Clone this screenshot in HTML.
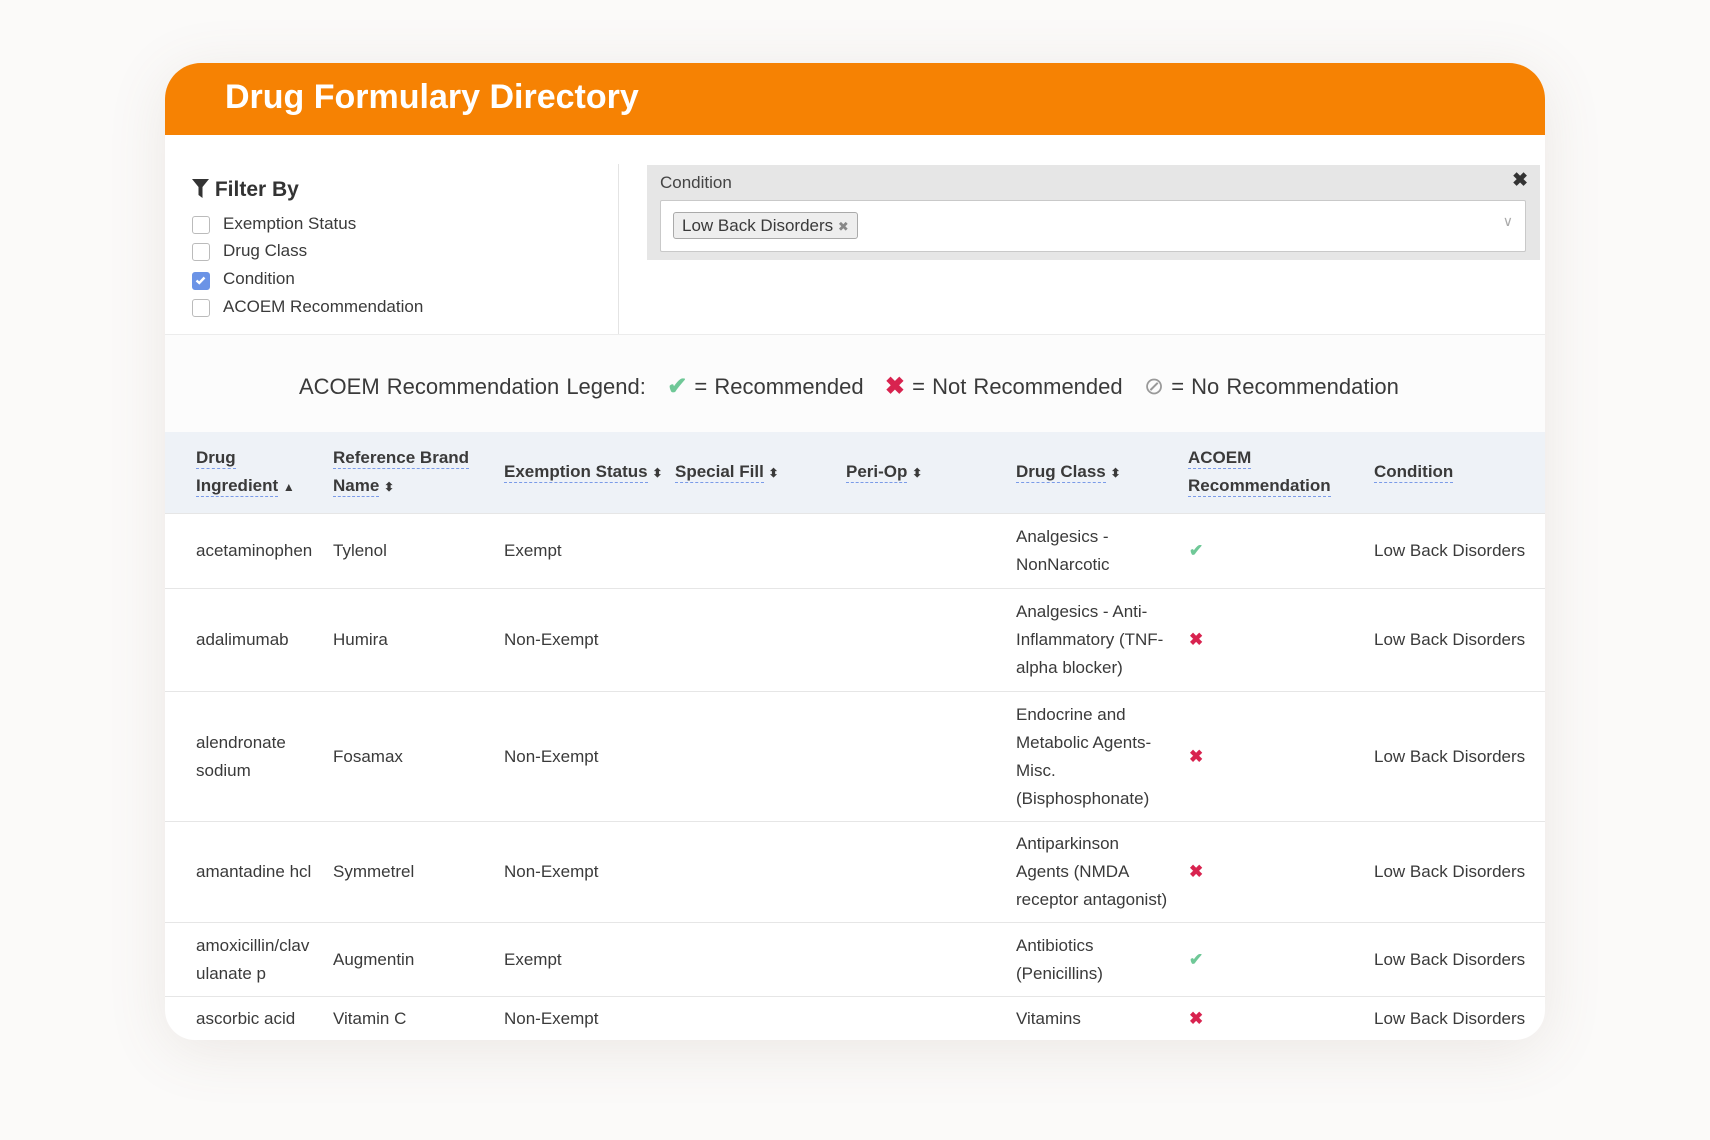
<!DOCTYPE html>
<html><head><meta charset="utf-8"><style>
*{box-sizing:border-box;margin:0;padding:0}
body{width:1710px;height:1140px;background:#fbfaf9;font-family:"Liberation Sans",sans-serif;color:#3a3a3a;position:relative;overflow:hidden}
.card{position:absolute;left:165px;top:63px;width:1380px;height:977px;background:#fff;border-radius:36px 36px 30px 30px;box-shadow:0 10px 60px rgba(120,100,80,0.12);overflow:hidden}
.hdr{position:absolute;left:0;top:0;width:100%;height:72px;background:#f68203;color:#fff;font-size:34px;font-weight:bold;padding-left:60px;line-height:68px}
.abs{position:absolute;white-space:nowrap}
.cb{position:absolute;left:27px;width:18px;height:18px;border:1.5px solid #bbb;border-radius:3px;background:#fff}
.lbl{position:absolute;left:58px;font-size:17px}
.th{position:absolute;font-size:17px;font-weight:bold;color:#3a3a3a;line-height:28px;white-space:nowrap}
.u{border-bottom:1.5px dashed #7a9be8;padding-bottom:1px}
.row{position:absolute;left:0;width:100%;border-top:1.5px solid #e6e6e6}
.c{position:absolute;top:50%;transform:translateY(-50%);font-size:17px;line-height:28px;white-space:nowrap}
.ok{color:#6fc897;font-weight:bold}
.no{color:#d8234f;font-weight:bold}
.s{font-size:12px}
</style></head><body>
<div class="card">
<div class="hdr">Drug Formulary Directory</div>
<div class="abs" style="left:27px;top:115px;font-size:21px;font-weight:bold;color:#333">
<svg width="17" height="19" viewBox="0 0 17 19" style="vertical-align:-2px"><path d="M0 0H17L10.5 8V19L6.5 16V8Z" fill="#333"/></svg> Filter By</div>
<div class="cb" style="top:153px"></div><div class="lbl" style="top:151px">Exemption Status</div>
<div class="cb" style="top:180px"></div><div class="lbl" style="top:178px">Drug Class</div>
<div class="cb" style="top:209px;background:#6b93e6;border-color:#6b93e6"><svg width="15" height="15" viewBox="0 0 15 15" style="position:absolute;left:0;top:0"><path d="M3.5 7.5L6.3 10L11.5 4.5" stroke="#fff" stroke-width="2.4" fill="none"/></svg></div><div class="lbl" style="top:206px">Condition</div>
<div class="cb" style="top:236px"></div><div class="lbl" style="top:234px">ACOEM Recommendation</div>
<div class="abs" style="left:453px;top:101px;width:1px;height:171px;background:#e4e4e4"></div>
<div class="abs" style="left:482px;top:102px;width:893px;height:95px;background:#e6e6e6">
<div class="abs" style="left:13px;top:8px;font-size:17px;color:#444">Condition</div>
<div class="abs" style="right:12px;top:4px;font-size:19px;font-weight:bold;color:#333">✖</div>
<div class="abs" style="left:13px;top:35px;width:866px;height:52px;background:#fff;border:1px solid #c9c9c9;border-radius:2px">
<div class="abs" style="left:12px;top:11px;height:27px;padding:0 8px;border:1px solid #aaa;border-radius:3px;background:#eee;font-size:17px;line-height:25px">Low Back Disorders <span style="color:#888;font-size:13px">✖</span></div>
<div class="abs" style="right:12px;top:12px;color:#aaa;font-size:14px">∨</div>
</div></div>
<div class="abs" style="left:0;top:271px;width:100%;height:98px;background:#fcfcfc;border-top:1.5px solid #ececec"></div>
<div class="abs" style="left:134px;top:309px;font-size:22px;color:#3a3a3a;word-spacing:1px">ACOEM Recommendation Legend: &nbsp; <span class="ok" style="font-size:24px">✔</span> = Recommended &nbsp; <span class="no" style="font-size:24px">✖</span> = Not Recommended &nbsp; <span style="color:#999;font-size:24px">⊘</span> = No Recommendation</div>
<div class="abs" style="left:0;top:369px;width:100%;height:81px;background:#eef2f7"></div>
<div class="th" style="left:31px;top:381px"><span class="u">Drug</span><br><span class="u">Ingredient</span> <span class="s">▲</span></div>
<div class="th" style="left:168px;top:381px"><span class="u">Reference Brand</span><br><span class="u">Name</span> <span class="s">⬍</span></div>
<div class="th" style="left:339px;top:395px"><span class="u">Exemption Status</span> <span class="s">⬍</span></div>
<div class="th" style="left:510px;top:395px"><span class="u">Special Fill</span> <span class="s">⬍</span></div>
<div class="th" style="left:681px;top:395px"><span class="u">Peri-Op</span> <span class="s">⬍</span></div>
<div class="th" style="left:851px;top:395px"><span class="u">Drug Class</span> <span class="s">⬍</span></div>
<div class="th" style="left:1023px;top:381px"><span class="u">ACOEM</span><br><span class="u">Recommendation</span></div>
<div class="th" style="left:1209px;top:395px"><span class="u">Condition</span></div>

<div class="row" style="top:450px;height:75px">
<div class="c" style="left:31px">acetaminophen</div><div class="c" style="left:168px">Tylenol</div><div class="c" style="left:339px">Exempt</div>
<div class="c" style="left:851px">Analgesics -<br>NonNarcotic</div><div class="c ok" style="left:1024px">✔</div><div class="c" style="left:1209px">Low Back Disorders</div></div>
<div class="row" style="top:525px;height:103px">
<div class="c" style="left:31px">adalimumab</div><div class="c" style="left:168px">Humira</div><div class="c" style="left:339px">Non-Exempt</div>
<div class="c" style="left:851px">Analgesics - Anti-<br>Inflammatory (TNF-<br>alpha blocker)</div><div class="c no" style="left:1024px">✖</div><div class="c" style="left:1209px">Low Back Disorders</div></div>
<div class="row" style="top:628px;height:130px">
<div class="c" style="left:31px">alendronate<br>sodium</div><div class="c" style="left:168px">Fosamax</div><div class="c" style="left:339px">Non-Exempt</div>
<div class="c" style="left:851px">Endocrine and<br>Metabolic Agents-<br>Misc.<br>(Bisphosphonate)</div><div class="c no" style="left:1024px">✖</div><div class="c" style="left:1209px">Low Back Disorders</div></div>
<div class="row" style="top:758px;height:101px">
<div class="c" style="left:31px">amantadine hcl</div><div class="c" style="left:168px">Symmetrel</div><div class="c" style="left:339px">Non-Exempt</div>
<div class="c" style="left:851px">Antiparkinson<br>Agents (NMDA<br>receptor antagonist)</div><div class="c no" style="left:1024px">✖</div><div class="c" style="left:1209px">Low Back Disorders</div></div>
<div class="row" style="top:859px;height:74px">
<div class="c" style="left:31px">amoxicillin/clav<br>ulanate p</div><div class="c" style="left:168px">Augmentin</div><div class="c" style="left:339px">Exempt</div>
<div class="c" style="left:851px">Antibiotics<br>(Penicillins)</div><div class="c ok" style="left:1024px">✔</div><div class="c" style="left:1209px">Low Back Disorders</div></div>
<div class="row" style="top:933px;height:44px">
<div class="c" style="left:31px">ascorbic acid</div><div class="c" style="left:168px">Vitamin C</div><div class="c" style="left:339px">Non-Exempt</div>
<div class="c" style="left:851px">Vitamins</div><div class="c no" style="left:1024px">✖</div><div class="c" style="left:1209px">Low Back Disorders</div></div>
</div>
</body></html>
